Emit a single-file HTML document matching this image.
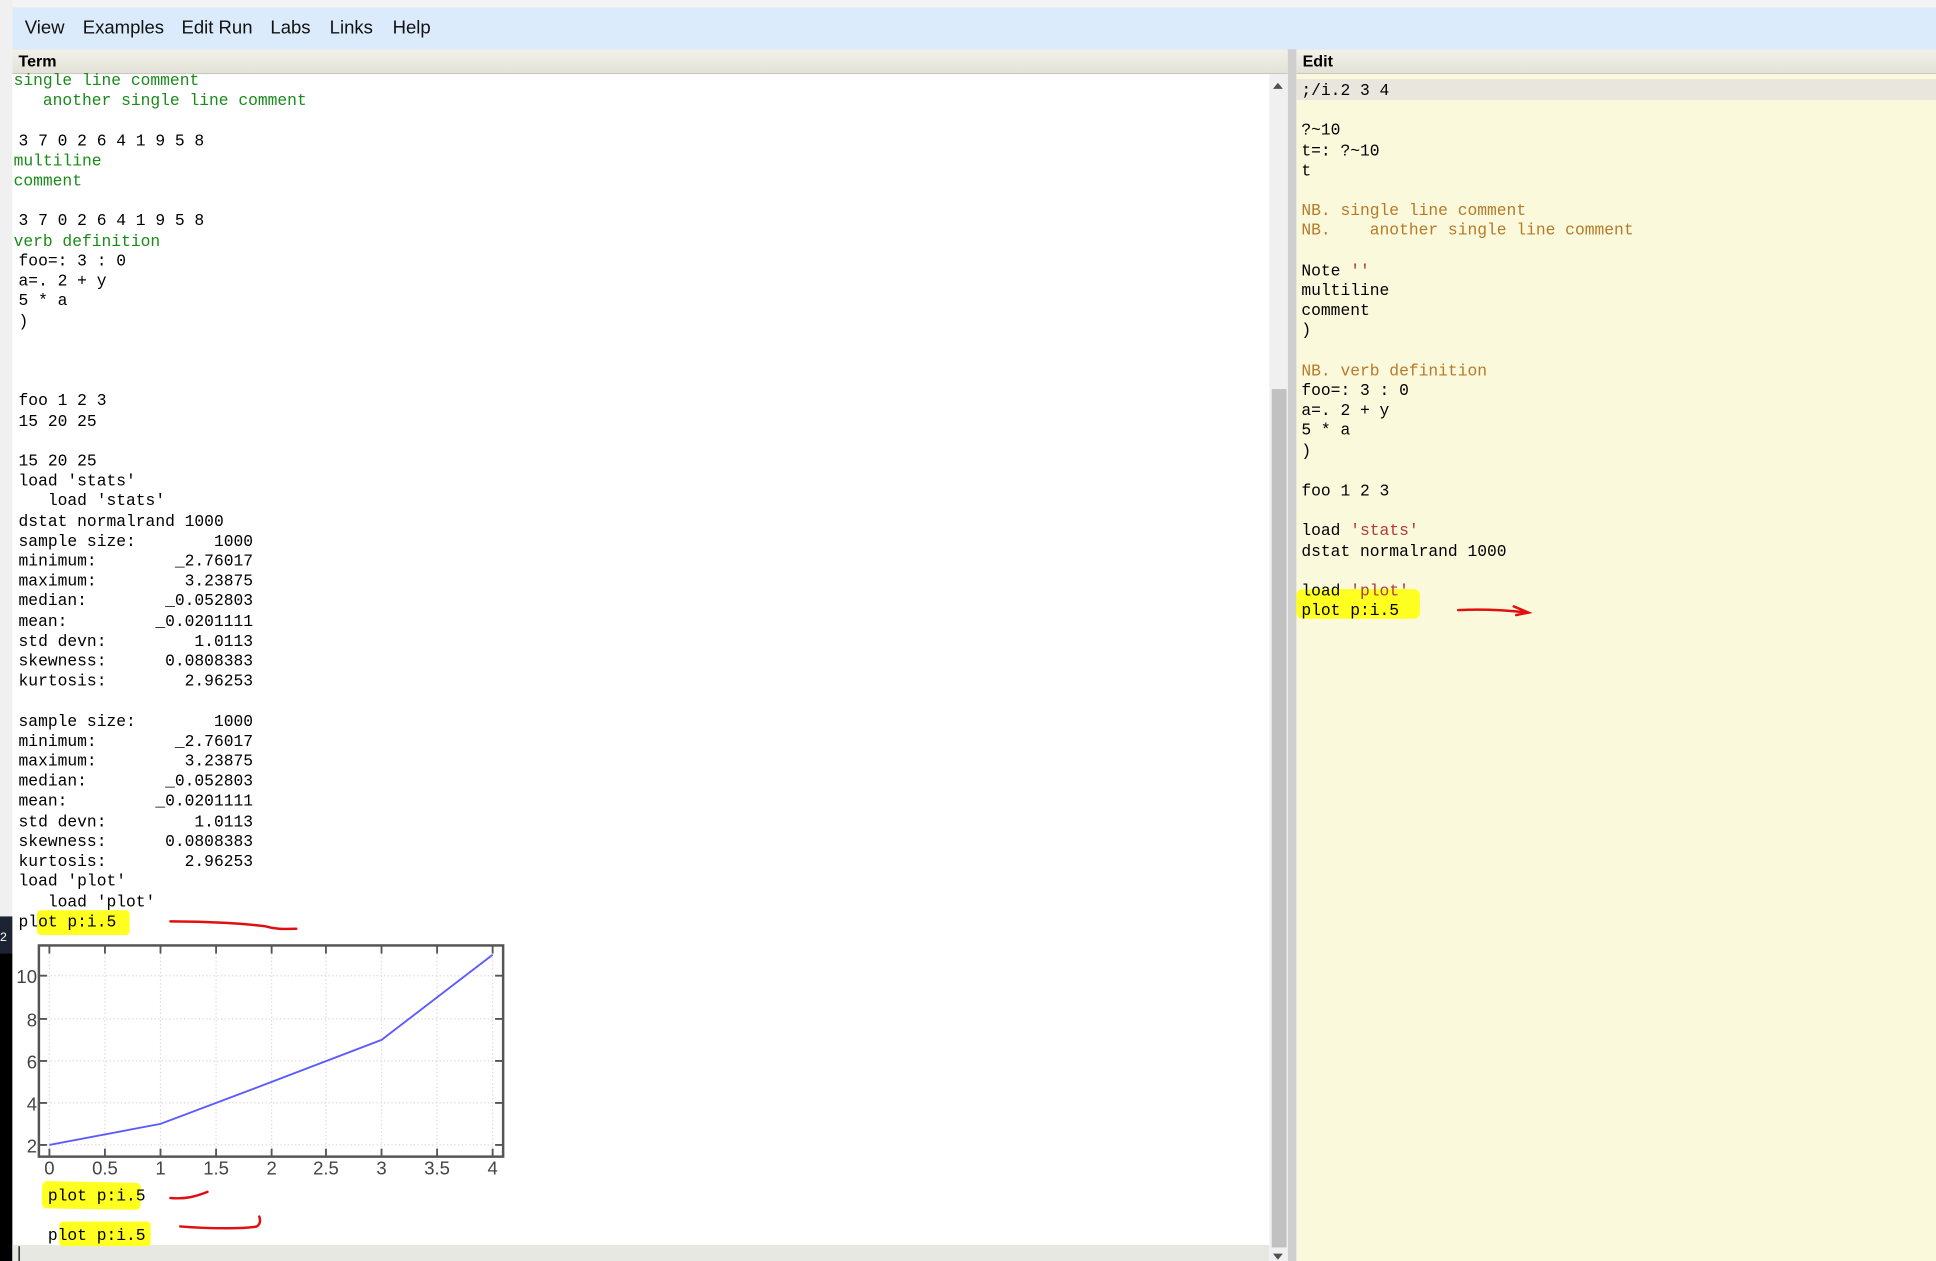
<!DOCTYPE html>
<html><head><meta charset="utf-8">
<style>
html,body{margin:0;padding:0;width:1936px;height:1261px;overflow:hidden;background:#fff}
#w{position:absolute;left:0;top:0;width:1568px;height:1021px;transform:scale(1.234694,1.235064);transform-origin:0 0;overflow:hidden;background:#fff;font-family:"Liberation Sans",Arial,sans-serif}
.abs{position:absolute}
.menu{left:10px;top:6px;width:1558px;height:34px;background:#dcebfb;border-bottom:1px solid #b8c4d0}
.menu span{position:absolute;top:8px;font-size:15px;color:#111}
.hdr{height:20px;background:linear-gradient(#f2f2ea,#e2e2d8);border-bottom:1px solid #c8c8c0;font-weight:bold;font-size:13px;line-height:19px;padding-left:5px;box-sizing:border-box;color:#000}
pre{margin:0;font-family:"Liberation Mono",monospace;font-size:13.2px;line-height:16.2px;color:#000}
.g{color:#1a8a1a}
.nb{color:#b57a2a}
.s{color:#b03a3a}
.hl{background:#ffff20}
</style></head><body><div id="w">
<div class="abs" style="left:0;top:0;width:1568px;height:6px;background:#f4f4f4"></div>
<div class="abs" style="left:0;top:0;width:10px;height:742px;background:#f0f0f0"></div>
<div class="abs" style="left:0;top:742px;width:10px;height:30px;background:#1c2433;color:#fff;font-size:10px;line-height:12px">&nbsp;<br>2</div>
<div class="abs" style="left:0;top:772px;width:10px;height:249px;background:#000"></div>
<div class="abs menu"><span style="left:10px">View</span><span style="left:57px">Examples</span><span style="left:137px">Edit Run</span><span style="left:209px">Labs</span><span style="left:257px">Links</span><span style="left:308px">Help</span></div>
<div class="abs hdr" style="left:10px;top:40px;width:1033px">Term</div>
<div class="abs" style="left:1043px;top:40px;width:7px;height:981px;background:#cfcfcf"></div>
<div class="abs hdr" style="left:1050px;top:40px;width:518px">Edit</div>
<div class="abs" style="left:1028px;top:60px;width:15px;height:961px;background:#f0f0f0"></div>
<div class="abs" style="left:1030px;top:315px;width:12px;height:695px;background:#c1c1c1"></div>
<div class="abs" style="left:1031px;top:67px;width:0;height:0;border-left:4px solid transparent;border-right:4px solid transparent;border-bottom:5px solid #505050"></div>
<div class="abs" style="left:1031px;top:1015px;width:0;height:0;border-left:4px solid transparent;border-right:4px solid transparent;border-top:5px solid #505050"></div>
<div class="abs" style="left:10px;top:1008px;width:1018px;height:13px;background:#e8e8e2"></div>
<div class="abs" style="left:15px;top:1009px;width:1px;height:12px;background:#000"></div>
<div class="abs" style="left:1050px;top:60px;width:518px;height:961px;background:#fbf9db"></div>
<div class="abs" style="left:1050px;top:64px;width:518px;height:17px;background:#e9e7dd"></div>
<div class="abs hl" style="left:30px;top:737px;width:75px;height:20px;border-radius:3px"></div>
<div class="abs hl" style="left:34px;top:957px;width:80px;height:22px;border-radius:4px;transform:rotate(1deg)"></div>
<div class="abs hl" style="left:48px;top:989px;width:74px;height:20px;border-radius:3px"></div>
<div class="abs hl" style="left:1050px;top:477px;width:100px;height:24px;border-radius:5px"></div>
<pre class="abs" style="left:11px;top:58px"><span class="g">single line comment
   another single line comment</span>

<span style="padding-left:4px">3 7 0 2 6 4 1 9 5 8</span>
<span class="g">multiline
comment</span>

<span style="padding-left:4px">3 7 0 2 6 4 1 9 5 8</span>
<span class="g">verb definition</span></pre>
<pre class="abs" style="left:15px;top:204px">foo=: 3 : 0
a=. 2 + y
5 * a
)



foo 1 2 3
15 20 25

15 20 25
load 'stats'
   load 'stats'
dstat normalrand 1000
sample size:        1000
minimum:        _2.76017
maximum:         3.23875
median:        _0.052803
mean:         _0.0201111
std devn:         1.0113
skewness:      0.0808383
kurtosis:        2.96253

sample size:        1000
minimum:        _2.76017
maximum:         3.23875
median:        _0.052803
mean:         _0.0201111
std devn:         1.0113
skewness:      0.0808383
kurtosis:        2.96253
load 'plot'
   load 'plot'
plot p:i.5</pre>
<pre class="abs" style="left:15px;top:961px">   plot p:i.5</pre>
<pre class="abs" style="left:15px;top:993px">   plot p:i.5</pre>
<pre class="abs" style="left:1054px;top:66px">;/i.2 3 4

?~10
t=: ?~10
t

<span class="nb">NB. single line comment
NB.    another single line comment</span>

Note <span class="s">''</span>
multiline
comment
)

<span class="nb">NB. verb definition</span>
foo=: 3 : 0
a=. 2 + y
5 * a
)

foo 1 2 3

load <span class="s">'stats'</span>
dstat normalrand 1000

load <span class="s">'plot'</span>
plot p:i.5</pre>
<svg class="abs" style="left:0;top:755px" width="420" height="205" viewBox="0 755 420 205">
<g stroke="#d8d8d8" stroke-dasharray="1,2" stroke-width="1">
<line x1="40" y1="766" x2="40" y2="936"/><line x1="85" y1="766" x2="85" y2="936"/><line x1="130" y1="766" x2="130" y2="936"/><line x1="175" y1="766" x2="175" y2="936"/><line x1="220" y1="766" x2="220" y2="936"/><line x1="264" y1="766" x2="264" y2="936"/><line x1="309" y1="766" x2="309" y2="936"/><line x1="354" y1="766" x2="354" y2="936"/><line x1="399" y1="766" x2="399" y2="936"/>
<line x1="32" y1="790" x2="407" y2="790"/><line x1="32" y1="825" x2="407" y2="825"/><line x1="32" y1="859" x2="407" y2="859"/><line x1="32" y1="893" x2="407" y2="893"/><line x1="32" y1="927" x2="407" y2="927"/>
</g>
<rect x="31.5" y="765.5" width="376" height="171" fill="none" stroke="#555" stroke-width="2"/>
<g stroke="#555" stroke-width="1.5">
<path d="M40 766v6M85 766v6M130 766v6M175 766v6M220 766v6M264 766v6M309 766v6M354 766v6M399 766v6"/>
<path d="M40 936v-6M85 936v-6M130 936v-6M175 936v-6M220 936v-6M264 936v-6M309 936v-6M354 936v-6M399 936v-6"/>
<path d="M32 790h6M32 825h6M32 859h6M32 893h6M32 927h6M407 790h-6M407 825h-6M407 859h-6M407 893h-6M407 927h-6"/>
</g>
<polyline points="40,927 130,910 220,876 309,842 399,773" fill="none" stroke="#5a5aff" stroke-width="1.5"/>
<g font-family="Liberation Sans,Arial,sans-serif" font-size="15" fill="#444">
<text x="40" y="951" text-anchor="middle">0</text><text x="85" y="951" text-anchor="middle">0.5</text><text x="130" y="951" text-anchor="middle">1</text><text x="175" y="951" text-anchor="middle">1.5</text><text x="220" y="951" text-anchor="middle">2</text><text x="264" y="951" text-anchor="middle">2.5</text><text x="309" y="951" text-anchor="middle">3</text><text x="354" y="951" text-anchor="middle">3.5</text><text x="399" y="951" text-anchor="middle">4</text>
<text x="30" y="796" text-anchor="end">10</text><text x="30" y="831" text-anchor="end">8</text><text x="30" y="865" text-anchor="end">6</text><text x="30" y="899" text-anchor="end">4</text><text x="30" y="933" text-anchor="end">2</text>
</g>
</svg>
<svg class="abs" style="left:0;top:0" width="1568" height="1021">
<g fill="none" stroke="#e01010" stroke-width="2" stroke-linecap="round">
<path d="M138 746 C170 746 200 748 215 750 C225 753 232 752 240 752"/>
<path d="M138 970 C150 971 158 969 168 965"/>
<path d="M146 993 C170 995 200 995 208 993 C211 991 211 988 210 985"/>
<path d="M1181 494 C1200 493 1220 494 1238 496 M1226 491 L1238 496 L1228 498"/>
</g>
</svg>
</div></body></html>
